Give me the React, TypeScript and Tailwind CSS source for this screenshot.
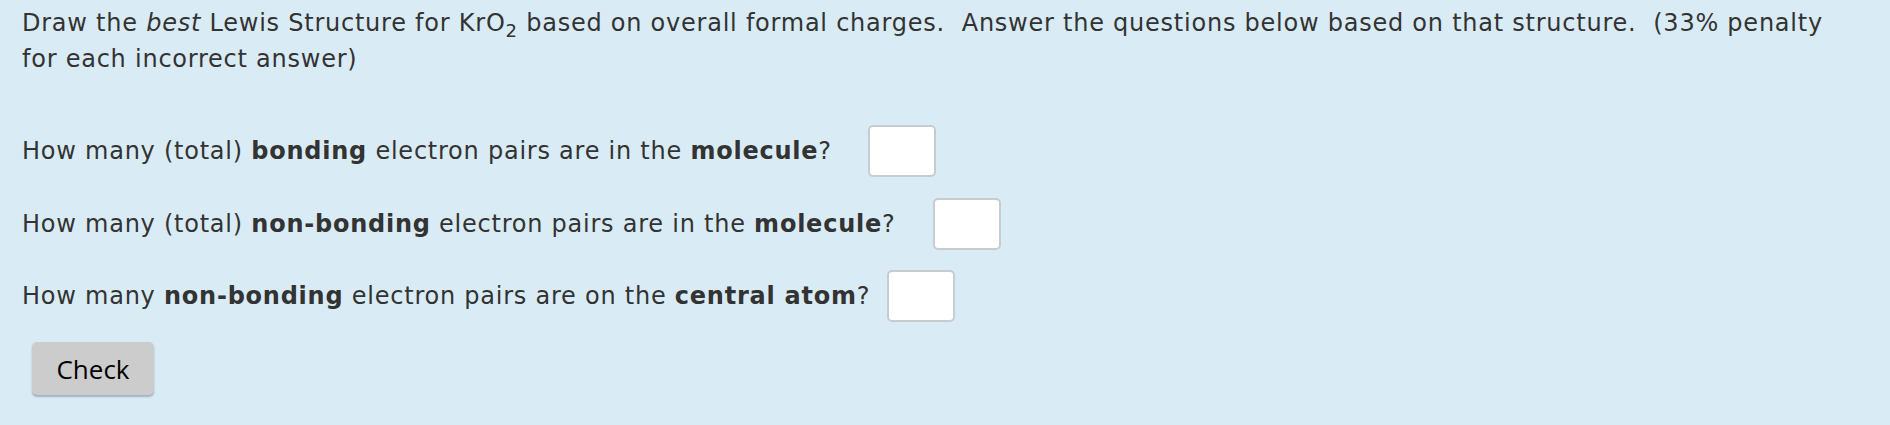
export default function App() {
  const rows = [
    {
      parts: [
        ["How many (total) ", false],
        ["bonding", true],
        [" electron pairs are in the ", false],
        ["molecule", true],
        ["?", false],
      ],
      gap: "ml-[36px]",
    },
    {
      parts: [
        ["How many (total) ", false],
        ["non-bonding", true],
        [" electron pairs are in the ", false],
        ["molecule", true],
        ["?", false],
      ],
      gap: "ml-[37px]",
    },
    {
      parts: [
        ["How many ", false],
        ["non-bonding", true],
        [" electron pairs are on the ", false],
        ["central atom", true],
        ["?", false],
      ],
      gap: "ml-[17px]",
    },
  ] as const;

  return (
    <div className="h-[425px] w-[1890px] bg-[#d9ecf6] pl-[22px] pr-[45px] pt-[5px] font-['DejaVu_Sans',sans-serif] text-[24px] leading-[36px] tracking-[0.76px] text-[#333]">
      <p>
        Draw the <em>best</em> Lewis Structure for KrO
        <sub className="relative top-[6px] text-[18px]">2</sub> based on overall formal charges.&nbsp; Answer the
        questions below based on that structure.&nbsp; (33% penalty for each incorrect answer)
      </p>

      <div className="mt-[48px] flex flex-col gap-[20.5px]">
        {rows.map((row, i) => (
          <div key={i} className="flex h-[52px] items-center">
            <span>
              {row.parts.map(([t, b], j) =>
                b ? (
                  <b key={j} className="font-bold">
                    {t}
                  </b>
                ) : (
                  <span key={j}>{t}</span>
                ),
              )}
            </span>
            <input
              type="text"
              className={`${row.gap} h-[52px] w-[68px] rounded-[5px] border-2 border-[#c9cccf] bg-white`}
            />
          </div>
        ))}
      </div>

      <button
        type="button"
        className="mt-[20px] ml-[10px] h-[53px] w-[122px] rounded-[5px] bg-[#cccccc] font-['Open_Sans',sans-serif] text-[26px] tracking-normal text-black shadow-[0_2px_2px_rgba(0,0,0,0.25)]"
      >
        Check
      </button>
    </div>
  );
}
